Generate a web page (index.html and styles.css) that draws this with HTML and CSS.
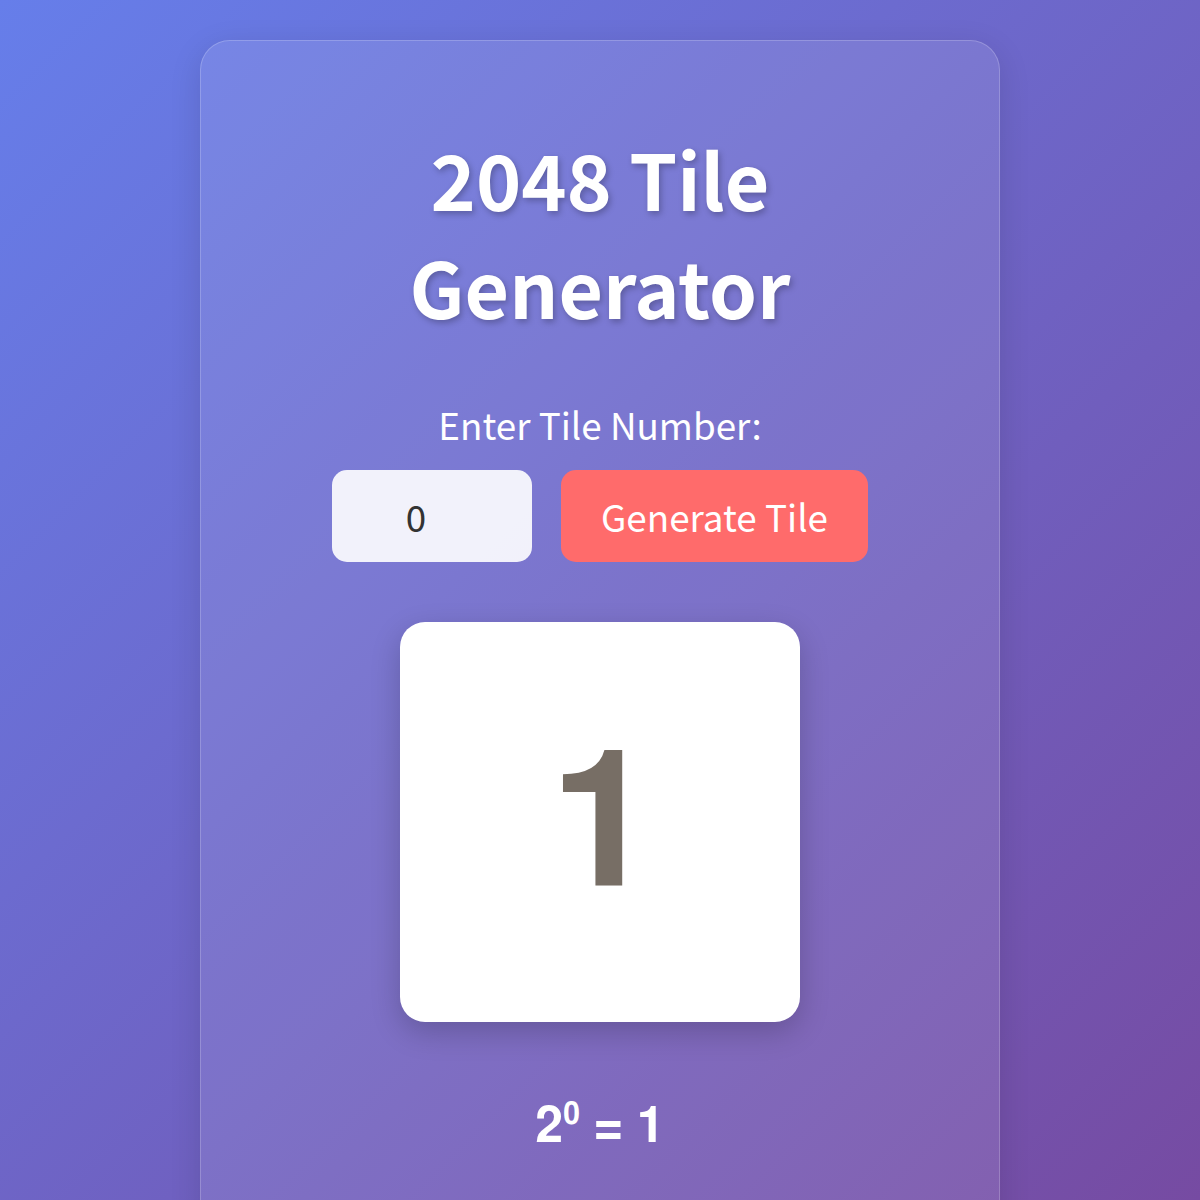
FILE: index.html
```html
<!DOCTYPE html>
<html lang="en">
<head>
<meta charset="utf-8">
<title>2048 Tile Generator</title>
<link rel="stylesheet" href="styles.css">
</head>
<body>
  <main class="card">
    <h1 class="title">2048 Tile Generator</h1>
    <label class="label" for="tile-input">Enter Tile Number:</label>
    <div class="controls">
      <input id="tile-input" class="tile-input" type="number" value="0">
      <button class="generate" type="button">Generate Tile</button>
    </div>
    <div class="tile"><span class="tile-value">1</span></div>
    <p class="formula">2<sup>0</sup> = 1</p>
  </main>
</body>
</html>
```
FILE: styles.css
```css
* { box-sizing: border-box; }

html, body { height: 100%; }

body {
  margin: 0;
  min-height: 100vh;
  background: linear-gradient(135deg, #667eea 0%, #764ba2 100%);
  font-family: "Noto Sans CJK SC", "Noto Sans", sans-serif;
  color: #fff;
  line-height: 1.4;
  display: flex;
  justify-content: center;
  padding-top: 40px;
  overflow: hidden;
}

.card {
  width: 800px;
  height: 1240px;
  padding: 40px 40px;
  border-radius: 30px;
  background: rgba(255, 255, 255, 0.1);
  border: 1px solid rgba(255, 255, 255, 0.2);
  box-shadow: 0 8px 32px rgba(0, 0, 0, 0.12);
  display: flex;
  flex-direction: column;
  align-items: center;
  text-align: center;
}

.title {
  margin: 43px 0 60px;
  font-size: 76.8px;
  font-weight: 700;
  line-height: 1.4;
  text-shadow: 2px 3px 6px rgba(0, 0, 0, 0.25);
}

.label {
  display: block;
  font-size: 36.8px;
  line-height: 1.4;
  margin-bottom: 19px;
}

.controls {
  display: flex;
  gap: 29px;
  margin-bottom: 60px;
}

.tile-input {
  width: 200px;
  height: 92px;
  padding: 0 32px 0 0;
  border: none;
  border-radius: 15px;
  background: rgba(255, 255, 255, 0.9);
  color: #333;
  font-family: inherit;
  font-size: 36.8px;
  text-align: center;
  outline: none;
  -moz-appearance: textfield;
}
.tile-input::-webkit-outer-spin-button,
.tile-input::-webkit-inner-spin-button { -webkit-appearance: none; margin: 0; }

.generate {
  width: 307px;
  height: 92px;
  border: none;
  border-radius: 15px;
  background: #ff6b6b;
  color: #fff;
  font-family: inherit;
  font-size: 36.8px;
  cursor: pointer;
}

.tile {
  width: 400px;
  height: 400px;
  padding: 14px 0 0 6px;
  border-radius: 25px;
  background: #fff;
  box-shadow: 0 10px 30px rgba(0, 0, 0, 0.2);
  display: flex;
  align-items: center;
  justify-content: center;
  margin-bottom: 70px;
}

.tile-value {
  font-family: "FreeSans", Helvetica, sans-serif;
  font-weight: 700;
  font-size: 191px;
  color: #776e65;
  line-height: 1;
}

.formula {
  margin: 0;
  font-family: "FreeSans", Helvetica, sans-serif;
  font-weight: 700;
  font-size: 50px;
  line-height: 1.4;
}
.formula sup { font-size: 0.6em; }
```
